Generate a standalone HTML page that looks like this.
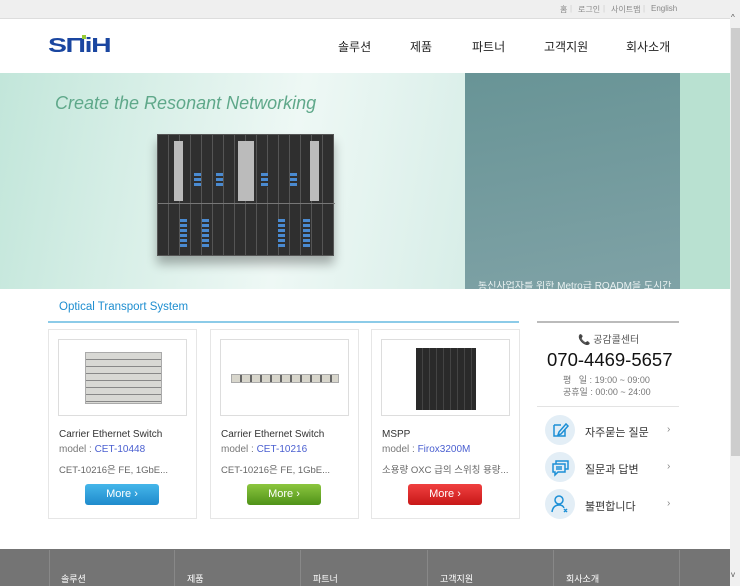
<!DOCTYPE html>
<html><head><meta charset="utf-8"><style>
*{margin:0;padding:0;box-sizing:border-box}
body{width:740px;height:586px;overflow:hidden;position:relative;background:#fff;font-family:"Liberation Sans","Noto Sans CJK KR",sans-serif;color:#333}
.a{position:absolute}
.top{left:0;top:0;width:730px;height:19px;background:#efefef;border-bottom:1px solid #ddd}
.top span{position:absolute;top:4px;font-size:8px;color:#888}
.nav{font-size:12px;color:#222;top:38px}
.card{border:1px solid #e6e6e6;width:149px;height:190px;top:329px}
.card .img{position:absolute;left:9px;top:9px;width:129px;height:77px;border:1px solid #ddd;background:#fff}
.card .t{position:absolute;left:10px;top:99px;font-size:10px;color:#333}
.card .m{position:absolute;left:10px;top:114px;font-size:10px;color:#777}
.card .m b{font-weight:normal;color:#4a5fd0}
.card .d{position:absolute;left:10px;top:132px;font-size:9.5px;color:#666}
.card .btn{position:absolute;left:36px;top:154px;width:74px;height:21px;border-radius:3px;color:#fff;font-size:11px;text-align:center;line-height:21px}
.ci{left:545px;width:30px;height:30px;border-radius:50%;background:#e3eef6}
.it{left:585px;font-size:11px;color:#333}
.ar{left:667px;font-size:10px;color:#888}
.ft{top:572px;font-size:9px;color:#fff}
.fd{top:550px;width:1px;height:36px;background:#888}
.slots{background:repeating-linear-gradient(90deg,#2f2f2f 0,#2f2f2f 10px,#555 10px,#555 11px)}
.blue{position:absolute;width:7px;height:14px;background:repeating-linear-gradient(#4a8ad0 0,#4a8ad0 3px,#2f2f2f 3px,#2f2f2f 5px)}
</style></head><body>
<div class="a top">
<span style="left:560px">홈</span><span style="left:570px;color:#ccc">|</span>
<span style="left:578px">로그인</span><span style="left:603px;color:#ccc">|</span>
<span style="left:611px">사이트맵</span><span style="left:643px;color:#ccc">|</span>
<span style="left:651px">English</span>
</div>
<div class="a" style="left:48px;top:35px;font:bold 20px 'Liberation Sans',sans-serif;color:#1a46a0;letter-spacing:-1px;transform:scaleX(1.42);transform-origin:left">SΠiH</div>
<div class="a" style="left:82px;top:35px;width:4px;height:4px;background:#9c3"></div>
<div class="a nav" style="left:338px">솔루션</div>
<div class="a nav" style="left:410px">제품</div>
<div class="a nav" style="left:472px">파트너</div>
<div class="a nav" style="left:544px">고객지원</div>
<div class="a nav" style="left:626px">회사소개</div>

<div class="a" style="left:0;top:73px;width:730px;height:216px;background:linear-gradient(100deg,#c2e6da 0%,#eef8f5 40%,#d8eee8 65%)"></div>
<div class="a" style="left:55px;top:93px;font-size:18px;font-style:italic;color:#5fa88a">Create the Resonant Networking</div>
<div class="a slots" style="left:157px;top:134px;width:177px;height:122px;border:1px solid #555;box-shadow:0 8px 10px rgba(0,0,0,.3)">
<div class="a" style="left:16px;top:6px;width:9px;height:60px;background:#bbb"></div>
<div class="a" style="left:80px;top:6px;width:16px;height:60px;background:#bbb"></div>
<div class="a" style="left:152px;top:6px;width:9px;height:60px;background:#bbb"></div>
<div class="a" style="left:0;top:68px;width:177px;height:1px;background:#777"></div>
<div class="blue" style="left:36px;top:38px"></div><div class="blue" style="left:58px;top:38px"></div><div class="blue" style="left:103px;top:38px"></div><div class="blue" style="left:132px;top:38px"></div>
<div class="blue" style="left:22px;top:84px;height:28px"></div><div class="blue" style="left:44px;top:84px;height:28px"></div><div class="blue" style="left:120px;top:84px;height:28px"></div><div class="blue" style="left:145px;top:84px;height:28px"></div>
</div>
<div class="a" style="left:465px;top:73px;width:215px;height:216px;background:linear-gradient(170deg,#689496,#7fa2a6)"></div>
<div class="a" style="left:680px;top:73px;width:50px;height:216px;background:#b9e1d1"></div>
<div class="a" style="left:478px;top:281px;width:200px;height:8px;overflow:hidden;font-size:10px;color:#e8f0f0;line-height:12px">통신사업자를 위한 Metro급 ROADM을 도시간 연</div>

<div class="a" style="left:59px;top:301px;font-size:11.5px;color:#1e8ed0">Optical Transport System</div>
<div class="a" style="left:48px;top:321px;width:471px;height:2px;background:#8ccbe8"></div>

<div class="a card" style="left:48px"><div class="img"><div class="a" style="left:26px;top:12px;width:77px;height:52px;background:repeating-linear-gradient(#d8d8d4 0,#d8d8d4 6px,#888 6px,#888 7px);border:1px solid #aaa"></div></div>
<div class="t">Carrier Ethernet Switch</div><div class="m">model : <b>CET-10448</b></div><div class="d">CET-10216은 FE, 1GbE...</div>
<div class="btn" style="background:linear-gradient(#45b6ea,#1f8bcc)">More ›</div></div>
<div class="a card" style="left:210px"><div class="img"><div class="a" style="left:10px;top:34px;width:108px;height:9px;background:repeating-linear-gradient(90deg,#d8d6cc 0,#d8d6cc 8px,#666 8px,#666 10px);border:1px solid #aaa"></div></div>
<div class="t">Carrier Ethernet Switch</div><div class="m">model : <b>CET-10216</b></div><div class="d">CET-10216은 FE, 1GbE...</div>
<div class="btn" style="background:linear-gradient(#8cc63f,#4f9218)">More ›</div></div>
<div class="a card" style="left:371px"><div class="img"><div class="a" style="left:34px;top:8px;width:60px;height:62px;background:repeating-linear-gradient(90deg,#2a2a2a 0,#2a2a2a 6px,#444 6px,#444 7px)"></div></div>
<div class="t">MSPP</div><div class="m">model : <b>Firox3200M</b></div><div class="d">소용량 OXC 급의 스위칭 용량...</div>
<div class="btn" style="background:linear-gradient(#f04040,#c81818)">More ›</div></div>

<div class="a" style="left:537px;top:321px;width:142px;height:2px;background:#bbb"></div>
<div class="a" style="left:578px;top:331px;font-size:10px;color:#555"><span style="color:#1a3a8a">📞</span> 공감콜센터</div>
<div class="a" style="left:547px;top:349px;font-size:18.5px;color:#111">070-4469-5657</div>
<div class="a" style="left:563px;top:373px;font-size:9px;color:#777">평 &nbsp;&nbsp;일 : 19:00 ~ 09:00</div>
<div class="a" style="left:563px;top:385px;font-size:9px;color:#777">공휴일 : 00:00 ~ 24:00</div>
<div class="a" style="left:537px;top:406px;width:142px;height:1px;background:#e3e3e3"></div>
<div class="a ci" style="top:415px"><svg width="30" height="30"><path d="M9 10h7M9 10v11h11v-7M14 17l7-8 2 2-7 8-3 1z" fill="none" stroke="#1c8fd6" stroke-width="1.5"/></svg></div>
<div class="a it" style="top:424px">자주묻는 질문</div><div class="a ar" style="top:424px">›</div>
<div class="a ci" style="top:452px"><svg width="30" height="30"><path d="M8 12h12v8h-7l-3 3v-3H8zM11 12V9h12v8h-3M11 15h6M11 17h6" fill="none" stroke="#1c8fd6" stroke-width="1.5"/></svg></div>
<div class="a it" style="top:461px">질문과 답변</div><div class="a ar" style="top:461px">›</div>
<div class="a ci" style="top:489px"><svg width="30" height="30"><circle cx="14" cy="11" r="4" fill="none" stroke="#1c8fd6" stroke-width="1.5"/><path d="M7 23q1-7 7-7 4 0 5 3M19 20l3 3M22 20l-3 3" fill="none" stroke="#1c8fd6" stroke-width="1.5"/></svg></div>
<div class="a it" style="top:498px">불편합니다</div><div class="a ar" style="top:498px">›</div>

<div class="a" style="left:0;top:549px;width:730px;height:37px;background:#747474"></div>
<div class="a fd" style="left:49px"></div><div class="a fd" style="left:174px"></div><div class="a fd" style="left:300px"></div><div class="a fd" style="left:427px"></div><div class="a fd" style="left:553px"></div><div class="a fd" style="left:679px"></div>
<div class="a ft" style="left:61px">솔루션</div><div class="a ft" style="left:187px">제품</div><div class="a ft" style="left:313px">파트너</div><div class="a ft" style="left:440px">고객지원</div><div class="a ft" style="left:566px">회사소개</div>

<div class="a" style="left:730px;top:0;width:10px;height:586px;background:#f0f0f0"></div>
<div class="a" style="left:731px;top:28px;width:9px;height:428px;background:#cdcdcd"></div>
<div class="a" style="left:731px;top:13px;font-size:8px;color:#555">^</div>
<div class="a" style="left:731px;top:570px;font-size:8px;color:#555">v</div>
</body></html>
